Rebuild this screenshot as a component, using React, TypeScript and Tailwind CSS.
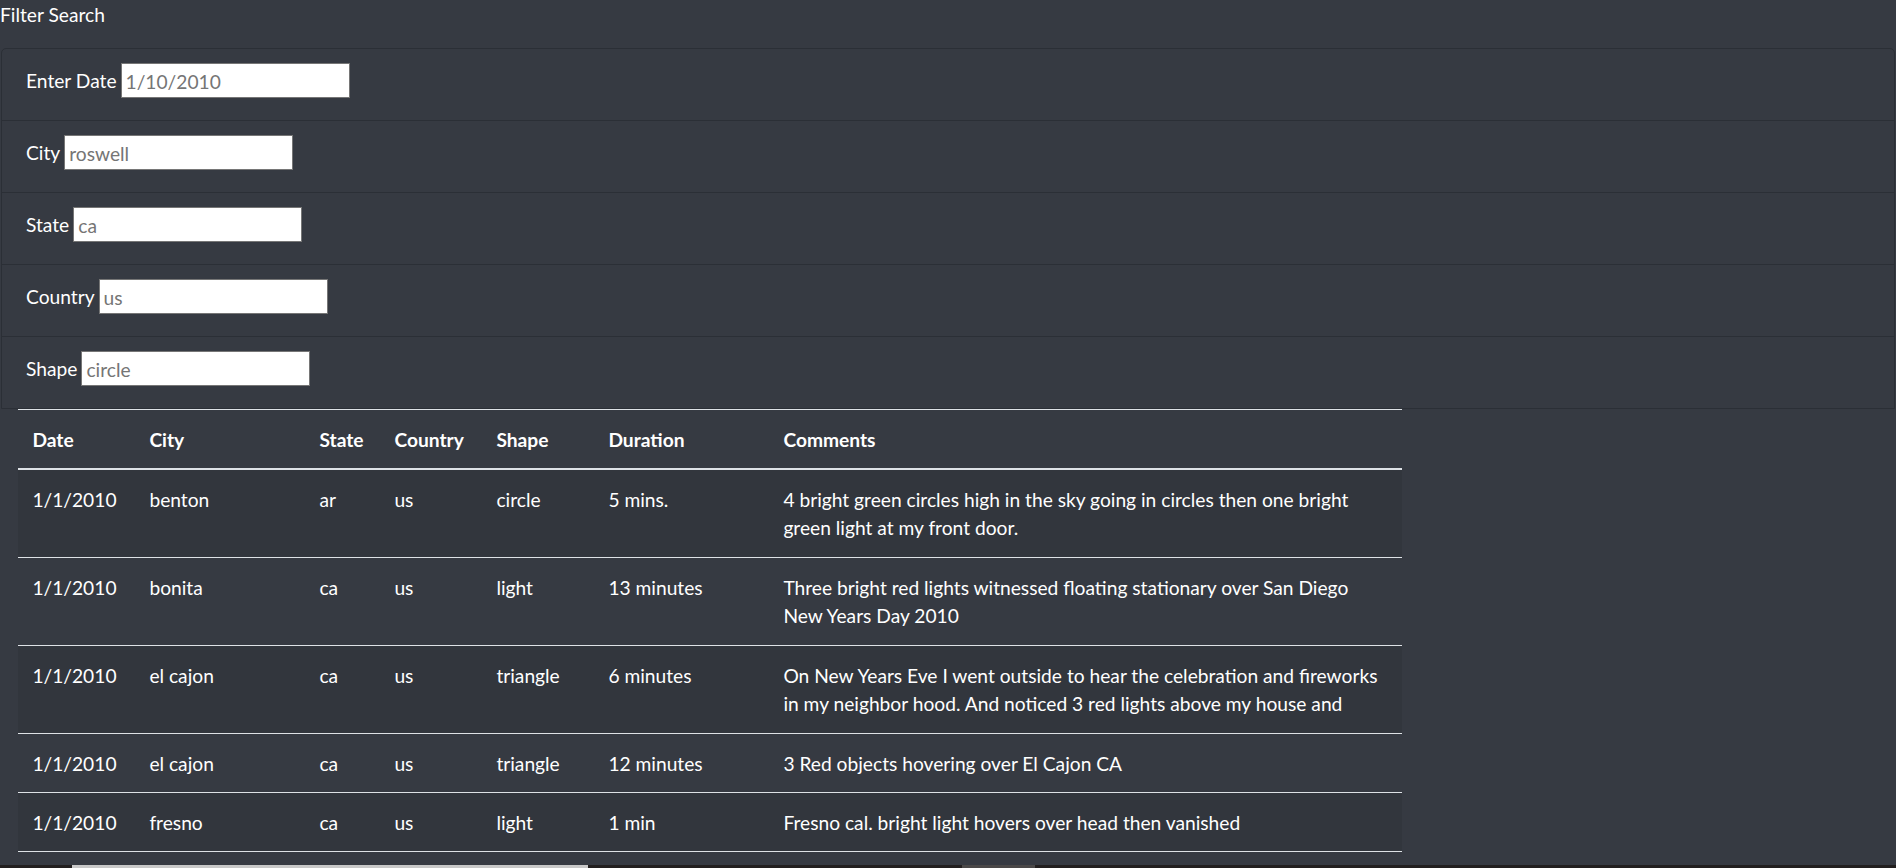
import React from "react";

const rows = [
  {
    date: "1/1/2010",
    city: "benton",
    state: "ar",
    country: "us",
    shape: "circle",
    duration: "5 mins.",
    comments:
      "4 bright green circles high in the sky going in circles then one bright green light at my front door.",
  },
  {
    date: "1/1/2010",
    city: "bonita",
    state: "ca",
    country: "us",
    shape: "light",
    duration: "13 minutes",
    comments: "Three bright red lights witnessed floating stationary over San Diego New Years Day 2010",
  },
  {
    date: "1/1/2010",
    city: "el cajon",
    state: "ca",
    country: "us",
    shape: "triangle",
    duration: "6 minutes",
    comments:
      "On New Years Eve I went outside to hear the celebration and fireworks in my neighbor hood. And noticed 3 red lights above my house and",
  },
  {
    date: "1/1/2010",
    city: "el cajon",
    state: "ca",
    country: "us",
    shape: "triangle",
    duration: "12 minutes",
    comments: "3 Red objects hovering over El Cajon CA",
  },
  {
    date: "1/1/2010",
    city: "fresno",
    state: "ca",
    country: "us",
    shape: "light",
    duration: "1 min",
    comments: "Fresno cal. bright light hovers over head then vanished",
  },
];

const filters = [
  { label: "Enter Date", ph: "1/10/2010" },
  { label: "City", ph: "roswell" },
  { label: "State", ph: "ca" },
  { label: "Country", ph: "us" },
  { label: "Shape", ph: "circle" },
];

export default function App() {
  return (
    <div
      className="h-[868px] w-[1896px] overflow-hidden bg-[#363a42] text-white flex flex-col text-[19.2px] leading-[28.8px]"
      style={{ fontFamily: "Lato, 'Liberation Sans', sans-serif" }}
    >
      <div className="h-[48px] shrink-0 pt-[1px]">Filter Search</div>
      <div className="shrink-0 mx-[1px] border border-[#2b2f36] rounded-tl-[5px] rounded-tr-[5px]">
        {filters.map((f, i) => (
          <div
            key={f.label}
            className={`flex items-start pl-[24px] pt-[14px] ${i === 0 ? "h-[71px]" : "h-[72px] border-t border-[#2b2f36]"}`}
          >
            <div className="flex items-center h-[35px] gap-[4px]">
              <span className="pt-[2px]">{f.label}</span>
              <input
                className="w-[229px] h-[35px] bg-white border border-[#767676] pl-[4px] pt-[2px] text-[19.2px] text-[#757575] placeholder:text-[#757575] outline-none"
                placeholder={f.ph}
                style={{ fontFamily: "Lato, 'Liberation Sans', sans-serif" }}
              />
            </div>
          </div>
        ))}
      </div>
      <div className="shrink-0 ml-[18px] w-[1384px]">
        <table className="w-full table-fixed border-collapse border-b border-[#dee2e6]">
          <colgroup>
            <col className="w-[117px]" />
            <col className="w-[170px]" />
            <col className="w-[75px]" />
            <col className="w-[102px]" />
            <col className="w-[112px]" />
            <col className="w-[175px]" />
            <col className="w-[633px]" />
          </colgroup>
          <thead>
            <tr className="border-t border-[#dee2e6]">
              {["Date", "City", "State", "Country", "Shape", "Duration", "Comments"].map((h) => (
                <th
                  key={h}
                  className="text-left font-bold px-[14.4px] pt-[16px] pb-[12.8px] align-top border-b-[2.4px] border-[#dee2e6]"
                >
                  {h}
                </th>
              ))}
            </tr>
          </thead>
          <tbody>
            {rows.map((r, i) => (
              <tr key={i} className={`${i % 2 === 0 ? "bg-[#32363d]" : ""} ${i > 0 ? "border-t border-[#dee2e6]" : ""}`}>
                {[r.date, r.city, r.state, r.country, r.shape, r.duration, r.comments].map((c, j) => (
                  <td key={j} className="px-[14.4px] pt-[16px] pb-[13.4px] align-top">
                    {c}
                  </td>
                ))}
              </tr>
            ))}
          </tbody>
        </table>
      </div>
      <div className="mt-auto h-[3px] bg-[#221f1f] flex shrink-0">
        <div className="ml-[72px] w-[516px] bg-[#c8c8c8]" />
        <div className="ml-[374px] w-[73px] bg-[#4a4848]" />
      </div>
    </div>
  );
}
